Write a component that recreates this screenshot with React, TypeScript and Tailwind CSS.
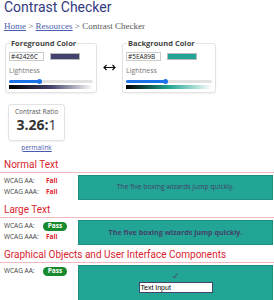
const FG = '#42426C'
const BG = '#22a594'

function ColorBox({ label, hex, color, thumb, gradient, className }: { label: string; hex: string; color: string; thumb: number; gradient: string; className?: string }) {
  return (
    <fieldset className={`border border-[#e3e3e3] rounded-[3px] shadow-[0_1px_2px_rgba(0,0,0,0.06)] px-[3px] pb-[3px] ${className ?? ''}`}>
      <legend className="ml-[1px] px-[1px] text-[7.5px] font-bold text-[#444] leading-[8px]">{label}</legend>
      <div className="flex items-center gap-[6px] mt-[5px]">
        <div className="w-[35px] h-[9px] border border-[#ccc] text-[6.5px] leading-[7px] text-[#222] pl-[1px]">{hex}</div>
        <div className="w-[30px] h-[7px] border border-[#bbb]" style={{ backgroundColor: color }} />
      </div>
      <div className="text-[7px] text-[#777] mt-[5px] leading-[9px]">Lightness</div>
      <div className="relative h-[6px] mt-[3px]">
        <div className="absolute left-0 right-0 top-[2px] h-[3px] rounded-full bg-[#e2e2e2]" />
        <div className="absolute left-0 top-[2px] h-[3px] rounded-full bg-[#1a73e8]" style={{ width: thumb }} />
        <div className="absolute top-[1px] w-[5px] h-[5px] rounded-full bg-[#1a73e8]" style={{ left: thumb - 2 }} />
      </div>
      <div className="h-[4px] mt-[1px]" style={{ background: gradient }} />
    </fieldset>
  )
}

function Badge({ pass }: { pass: boolean }) {
  return pass ? (
    <span className="inline-flex items-center justify-center w-[24px] h-[9px] rounded-full bg-[#178a2e] text-white text-[6.5px] font-bold leading-none">Pass</span>
  ) : (
    <span className="text-[#e0202e] text-[6.5px] font-bold leading-none pl-[3px]">Fail</span>
  )
}

function Section({ title, rows, children, boxClass }: { title: string; rows: [string, boolean][]; children: React.ReactNode; boxClass: string }) {
  return (
    <div className="mt-[3px]">
      <h2 className="font-['Roboto',sans-serif] text-[10px] leading-[13px] text-[#d91e2e] pl-[4px] border-b border-[#f1b9bf] pb-[1px]">{title}</h2>
      <div className="flex mt-[2px]">
        <div className="w-[78px] pl-[4px] pt-[1px] flex flex-col">
          {rows.map(([k, p]) => (
            <div key={k} className="flex items-center h-[11px]">
              <span className="w-[39px] text-[6.5px] leading-none text-[#444]">{k}</span>
              <Badge pass={p} />
            </div>
          ))}
        </div>
        <div className={`flex-1 mr-[1px] border border-[#1c8f80] bg-[#22a594] flex flex-col items-center justify-center ${boxClass}`}>
          {children}
        </div>
      </div>
    </div>
  )
}

export default function App() {
  return (
    <div className="w-[274px] h-[300px] overflow-hidden bg-white font-['Open_Sans',sans-serif] text-[#333]">
      <h1 className="font-['Roboto',sans-serif] text-[14px] leading-[14px] text-[#333a7f] pl-[4px]">Contrast Checker</h1>
      <p className="font-['Liberation_Serif',serif] text-[9px] text-[#555] pl-[4px] mt-[7px] leading-[10px]">
        <span className="text-[#4a5db0] underline">Home</span> &gt; <span className="text-[#4a5db0] underline">Resources</span> &gt; Contrast Checker
      </p>

      <div className="flex items-center pl-[5px] mt-[8px]">
        <ColorBox className="w-[92px]" label="Foreground Color" hex="#42426C" color={FG} thumb={30} gradient={`linear-gradient(to right, #000, ${FG} 50%, #fff)`} />
        <div className="w-[25px] flex justify-center mt-[2px]">
          <svg width="13" height="7" viewBox="0 0 13 7" fill="none" stroke="#111" strokeWidth="1.2">
            <path d="M1 3.5h11M3.5 1L1 3.5 3.5 6M9.5 1L12 3.5 9.5 6" />
          </svg>
        </div>
        <ColorBox className="w-[94px]" label="Background Color" hex="#5EA89B" color={BG} thumb={39} gradient={`linear-gradient(to right, #000, ${BG} 50%, #fff)`} />
      </div>

      <div className="ml-[8px] mt-[11px] w-[57px] h-[37px] border border-[#e3e3e3] rounded-[3px] shadow-[0_1px_2px_rgba(0,0,0,0.06)] flex flex-col items-center pt-[3px]">
        <div className="text-[6.5px] text-[#555] leading-[8px]">Contrast Ratio</div>
        <div className="text-[14px] leading-[18px] text-[#333]"><span className="font-bold">3.26:</span>1</div>
      </div>
      <div className="w-[73px] text-center text-[6.5px] text-[#4a5db0] underline mt-[3px] leading-[8px]">permalink</div>

      <div className="mt-[6px]">
        <Section title="Normal Text" rows={[['WCAG AA:', false], ['WCAG AAA:', false]]} boxClass="h-[25px]">
          <span className="text-[6.8px] text-[#42426C]">The five boxing wizards jump quickly.</span>
        </Section>
        <Section title="Large Text" rows={[['WCAG AA:', true], ['WCAG AAA:', false]]} boxClass="h-[25px]">
          <span className="text-[7.2px] font-bold text-[#42426C]">The five boxing wizards jump quickly.</span>
        </Section>
        <Section title="Graphical Objects and User Interface Components" rows={[['WCAG AA:', true]]} boxClass="h-[40px] justify-start pt-[5px]">
          <span className="text-[9px] leading-[9px] text-[#42426C]">✓</span>
          <div className="mt-[2px] w-[74px] h-[11px] bg-white border border-[#42426C] text-[7px] leading-[9px] text-black pl-[1px] font-['Liberation_Sans',sans-serif]">Text Input</div>
        </Section>
      </div>
    </div>
  )
}
